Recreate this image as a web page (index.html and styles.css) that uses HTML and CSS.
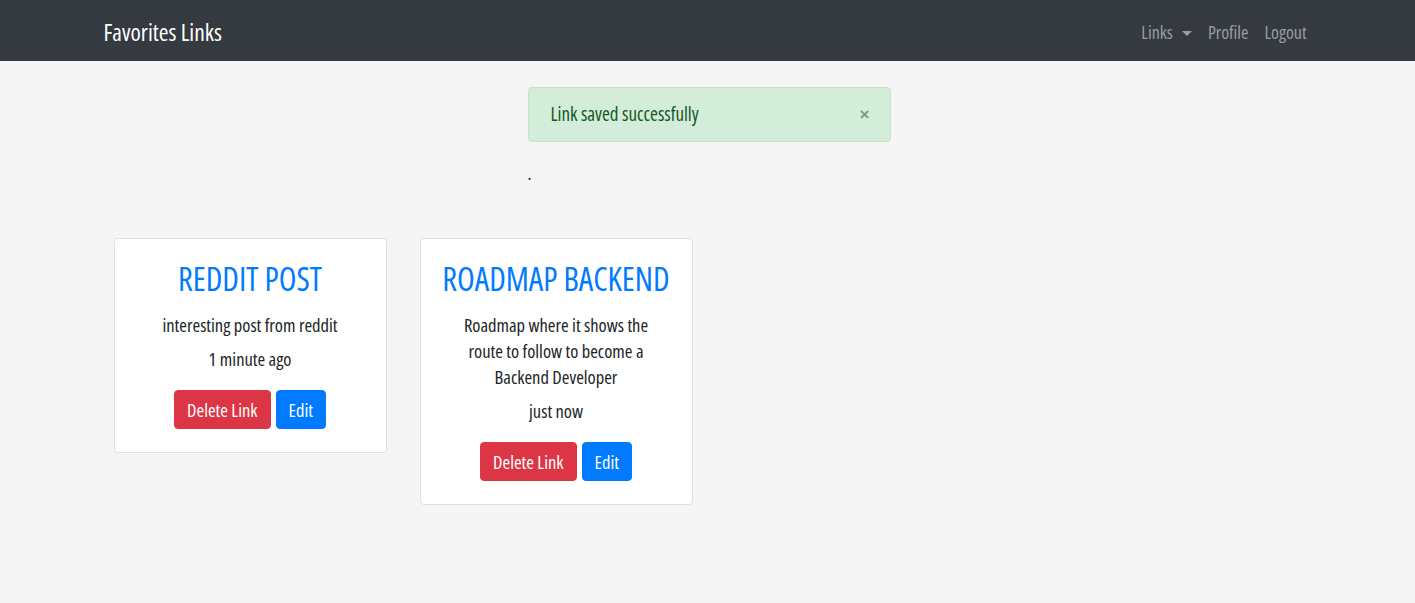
FILE: index.html
```html
<!DOCTYPE html>
<html lang="en">
<head>
    <meta charset="UTF-8">
    <meta name="viewport" content="width=device-width, initial-scale=1.0">
    <title>Favorites Links</title>
    <link rel="stylesheet" href="styles.css">
</head>
<body>
    <nav class="navbar">
        <div class="container navbar-inner">
            <a class="brand" href="#">Favorites Links</a>
            <ul class="nav-links">
                <li><a class="dropdown-toggle" href="#">Links</a></li>
                <li><a href="#">Profile</a></li>
                <li><a href="#">Logout</a></li>
            </ul>
        </div>
    </nav>

    <main class="container">
        <div class="message-col">
            <div class="alert">
                <span>Link saved successfully</span>
                <button class="close" type="button">&times;</button>
            </div>
            <p class="dot">.</p>
        </div>

        <div class="card-row">
            <div class="card">
                <div class="card-body">
                    <h3 class="card-title">REDDIT POST</h3>
                    <p>interesting post from reddit</p>
                    <p class="time">1 minute ago</p>
                    <div class="actions">
                        <button class="btn btn-danger">Delete Link</button>
                        <button class="btn btn-primary">Edit</button>
                    </div>
                </div>
            </div>
            <div class="card">
                <div class="card-body">
                    <h3 class="card-title">ROADMAP BACKEND</h3>
                    <p>Roadmap where it shows the route to follow to become a Backend Developer</p>
                    <p class="time">just now</p>
                    <div class="actions">
                        <button class="btn btn-danger">Delete Link</button>
                        <button class="btn btn-primary">Edit</button>
                    </div>
                </div>
            </div>
        </div>
    </main>
</body>
</html>
```

FILE: styles.css
```css
body {
    font-family: "Open Sans", "DejaVu Sans Condensed", sans-serif;
    font-stretch: 75%;
    font-weight: 500;
    margin: 0;
    padding: 0;
    background-color: #f5f5f5;
    color: #212529;
}
.container {
    width: 1210px;
    margin: 0 auto;
}
.navbar {
    background-color: #343a40;
    height: 61px;
}
.navbar-inner {
    display: flex;
    align-items: center;
    justify-content: space-between;
    height: 100%;
}
.brand {
    color: #fff;
    font-size: 23.5px;
    line-height: 32px;
    margin-top: 2px;
    margin-left: 1px;
    text-decoration: none;
}
.nav-links {
    display: flex;
    list-style: none;
    margin: 2px 0 0;
    padding: 0;
}
.nav-links a {
    display: block;
    padding: 0 8px;
    color: #9a9da0;
    font-size: 18px;
    text-decoration: none;
}
.nav-links li:last-child a {
    padding-right: 6px;
}
.dropdown-toggle::after {
    content: "";
    display: inline-block;
    margin-left: 9px;
    vertical-align: 3px;
    border-top: 5px solid #9a9da0;
    border-left: 5px solid transparent;
    border-right: 5px solid transparent;
}
.message-col {
    width: 363px;
    margin: 26px 0 0 425px;
}
.alert {
    display: flex;
    align-items: center;
    justify-content: space-between;
    padding: 12px 20px 12px 22px;
    line-height: 29px;
    font-size: 19px;
    color: #155724;
    background-color: #d4edda;
    border: 1px solid #c3e6cb;
    border-radius: 4px;
}
.close {
    background: none;
    border: none;
    padding: 0;
    font-family: "Liberation Sans", sans-serif;
    font-size: 17px;
    font-weight: bold;
    color: #155724;
    opacity: 0.5;
    cursor: pointer;
}
.dot {
    margin: 18px 0 0;
    line-height: 26px;
    font-size: 18.5px;
}
.card-row {
    display: flex;
    align-items: flex-start;
    gap: 33px;
    margin-top: 52px;
    padding-left: 11px;
}
.card {
    width: 273px;
    box-sizing: border-box;
    background-color: #fff;
    border: 1px solid #dfdfdf;
    border-radius: 4px;
}
.card-body {
    padding: 21px 20px 23px;
    text-align: center;
}
.card-title {
    margin: 0 0 14px;
    font-size: 32.5px;
    font-weight: 500;
    line-height: 38px;
    color: #007bff;
}
.card-body p {
    margin: 0 0 8px;
    padding: 0 15px;
    font-size: 18.5px;
    line-height: 26px;
}
.card-body p.time {
    margin-bottom: 18px;
}
.actions {
    display: flex;
    justify-content: center;
    gap: 5px;
}
.btn {
    height: 39px;
    padding: 0 12px;
    font-family: inherit;
    font-stretch: inherit;
    font-weight: inherit;
    font-size: 18.5px;
    color: #fff;
    border: 1px solid transparent;
    border-radius: 4px;
    cursor: pointer;
}
.btn-danger {
    background-color: #dc3545;
    border-color: #dc3545;
}
.btn-primary {
    background-color: #007bff;
    border-color: #007bff;
}
```
